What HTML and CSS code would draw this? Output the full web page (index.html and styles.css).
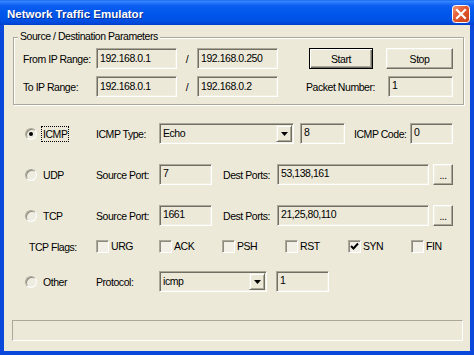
FILE: index.html
```html
<!DOCTYPE html>
<html>
<head>
<meta charset="utf-8">
<link rel="stylesheet" href="styles.css">
</head>
<body>
<div class="window">
  <div class="titlebar">
    <span class="title">Network Traffic Emulator</span>
    <span class="close">
      <svg width="18" height="18" viewBox="0 0 18 18">
        <defs>
          <linearGradient id="cg" x1="0" y1="0" x2="1" y2="1">
            <stop offset="0" stop-color="#F29A78"/>
            <stop offset="0.45" stop-color="#E2582E"/>
            <stop offset="1" stop-color="#C8401A"/>
          </linearGradient>
        </defs>
        <rect x="0.5" y="0.5" width="17" height="17" rx="3" fill="url(#cg)" stroke="#fff"/>
        <path d="M5 5 L13 13 M13 5 L5 13" stroke="#fff" stroke-width="2.2" stroke-linecap="square"/>
      </svg>
    </span>
  </div>
  <div class="client">
    <div class="group">
      <span class="legend">Source / Destination Parameters</span>
      <div class="row">
        <span class="lbl-ip">From IP Range:</span>
        <span class="edit ip">192.168.0.1</span>
        <span class="slash">/</span>
        <span class="edit ip">192.168.0.250</span>
        <span class="btn default start">Start</span>
        <span class="btn stop">Stop</span>
      </div>
      <div class="row">
        <span class="lbl-ip">To IP Range:</span>
        <span class="edit ip">192.168.0.1</span>
        <span class="slash">/</span>
        <span class="edit ip">192.168.0.2</span>
        <span class="pkt-lbl">Packet Number:</span>
        <span class="edit top pkt">1</span>
      </div>
    </div>

    <div class="opt icmp">
      <span class="rcell"><span class="radio checked"></span><span class="ltxt focus">ICMP</span></span>
      <span class="l2">ICMP Type:</span>
      <span class="combo icmp-combo"><span class="ctext">Echo</span><span class="drop"><svg width="7" height="4" viewBox="0 0 7 4"><path d="M0 0H7L3.5 4Z" fill="#000"/></svg></span></span>
      <span class="edit top type-num">8</span>
      <span class="code-lbl">ICMP Code:</span>
      <span class="edit top code">0</span>
    </div>

    <div class="opt udp">
      <span class="rcell"><span class="radio"></span><span class="ltxt">UDP</span></span>
      <span class="l2">Source Port:</span>
      <span class="edit top sport">7</span>
      <span class="dest-lbl">Dest Ports:</span>
      <span class="edit top dport">53,138,161</span>
      <span class="btn dots">...</span>
    </div>

    <div class="opt tcp">
      <span class="rcell"><span class="radio"></span><span class="ltxt">TCP</span></span>
      <span class="l2">Source Port:</span>
      <span class="edit top sport">1661</span>
      <span class="dest-lbl">Dest Ports:</span>
      <span class="edit top dport">21,25,80,110</span>
      <span class="btn dots">...</span>
    </div>

    <div class="opt flags">
      <span class="flags-lbl">TCP Flags:</span>
      <span class="flag"><span class="cb"></span><span class="ftxt">URG</span></span>
      <span class="flag"><span class="cb"></span><span class="ftxt">ACK</span></span>
      <span class="flag"><span class="cb"></span><span class="ftxt">PSH</span></span>
      <span class="flag"><span class="cb"></span><span class="ftxt">RST</span></span>
      <span class="flag"><span class="cb"><svg width="9" height="9" viewBox="0 0 9 9"><path d="M1 4 L3.5 6.5 L8 1.5" stroke="#000" stroke-width="2" fill="none"/></svg></span><span class="ftxt">SYN</span></span>
      <span class="flag"><span class="cb"></span><span class="ftxt">FIN</span></span>
    </div>

    <div class="opt other">
      <span class="rcell"><span class="radio"></span><span class="ltxt">Other</span></span>
      <span class="l2">Protocol:</span>
      <span class="combo proto-combo"><span class="ctext">icmp</span><span class="drop"><svg width="7" height="4" viewBox="0 0 7 4"><path d="M0 0H7L3.5 4Z" fill="#000"/></svg></span></span>
      <span class="edit top proto-num">1</span>
    </div>

    <div class="status"></div>
  </div>
</div>
</body>
</html>
```
FILE: styles.css
```css
* { box-sizing: border-box; }
html, body { margin: 0; padding: 0; }
body {
  width: 474px;
  height: 355px;
  overflow: hidden;
  font-family: "Liberation Sans", Arial, sans-serif;
  font-size: 10.5px;
  letter-spacing: -0.45px;
  white-space: nowrap;
  color: #000;
  background: #0A47DB;
}
.window {
  width: 474px;
  height: 355px;
  display: flex;
  flex-direction: column;
  background: #0A48DC;
}
.titlebar {
  height: 25px;
  flex: none;
  display: flex;
  align-items: flex-start;
  justify-content: space-between;
  padding: 0 4px 0 7px;
  background: linear-gradient(to bottom, #0A5AEE 0px, #3B8CFF 1px, #2474FA 3px, #0A5DF0 6px, #0056EB 14px, #0052E6 20px, #0045D5 24px, #003CC8 25px);
}
.title {
  margin-top: 7px;
  line-height: 14px;
  color: #fff;
  font-weight: bold;
  font-size: 11.5px;
  letter-spacing: 0;
  text-shadow: 1px 1px 0 #0A2C8C;
}
.close { display: block; width: 18px; height: 18px; margin-top: 5px; }
.close svg { display: block; }

.client {
  flex: 1;
  margin: 0 4px 4px;
  background: #ECE9D8;
  padding-top: 12px;
}

.group {
  position: relative;
  margin-left: 9px;
  width: 451px;
  border: 1px solid #ACA899;
  box-shadow: inset 1px 1px 0 #fff, 1px 1px 0 #fff;
  padding: 10px 0 7px 9px;
}
.legend {
  position: absolute;
  top: -8px;
  left: 4px;
  padding: 0 2px;
  line-height: 13px;
  background: #ECE9D8;
}
.row {
  display: flex;
  align-items: center;
  height: 21px;
}
.row + .row { margin-top: 7px; }
.lbl-ip { width: 73px; flex: none; }
.slash { width: 20px; flex: none; text-align: center; }

.edit {
  flex: none;
  height: 21px;
  border: 1px solid;
  border-color: #ACA899 #fff #fff #ACA899;
  box-shadow: inset 1px 1px 0 #716F64, inset -1px -1px 0 #F1EFE2;
  background: #ECE9D8;
  padding: 0 0 0 3px;
  line-height: 19px;
}
.edit.top { line-height: 13px; padding-top: 2px; }
.ip { width: 81px; }

.btn {
  flex: none;
  height: 21px;
  display: flex;
  align-items: center;
  justify-content: center;
  background: #ECE9D8;
  border: 1px solid;
  border-color: #fff #716F64 #716F64 #fff;
  box-shadow: inset -1px -1px 0 #ACA899, inset 1px 1px 0 #F1EFE2;
}
.btn.default {
  border-color: #000;
  box-shadow: inset 1px 1px 0 #fff, inset -1px -1px 0 #716F64, inset -2px -2px 0 #ACA899;
}
.start { margin-left: 31px; width: 64px; }
.stop { margin-left: 13px; width: 67px; }
.pkt-lbl { margin-left: 28px; width: 82px; flex: none; }
.pkt { width: 65px; }

.opt {
  display: flex;
  align-items: center;
  height: 21px;
  margin-left: 21px;
}
.opt.icmp { margin-top: 18px; }
.opt.udp { margin-top: 20px; }
.opt.tcp { margin-top: 20px; }
.opt.flags { margin-top: 10px; }
.opt.other { margin-top: 14px; }

.rcell { width: 71px; flex: none; display: flex; align-items: center; }
.radio {
  position: relative;
  width: 12px;
  height: 12px;
  border-radius: 50%;
  border: 1px solid;
  border-color: #ACA899 #fff #fff #ACA899;
  box-shadow: inset 1px 1px 0 #8E8B7E;
  background: #EFEDE2;
  flex: none;
}
.radio.checked::after {
  content: "";
  position: absolute;
  left: 3px;
  top: 3px;
  width: 4px;
  height: 4px;
  border-radius: 50%;
  background: #000;
}
.ltxt {
  margin-left: 4px;
  padding: 1px 1px 0;
  border: 1px dotted transparent;
  line-height: 13px;
}
.ltxt.focus { border-color: #000; }
.l2 { width: 63px; flex: none; }

.combo {
  flex: none;
  height: 21px;
  display: flex;
  align-items: center;
  justify-content: space-between;
  border: 1px solid;
  border-color: #ACA899 #fff #fff #ACA899;
  box-shadow: inset 1px 1px 0 #716F64, inset -1px -1px 0 #F1EFE2;
  background: #ECE9D8;
  padding: 1px;
}
.ctext { padding-left: 2px; line-height: 13px; }
.drop {
  width: 16px;
  height: 17px;
  display: flex;
  align-items: center;
  justify-content: center;
  border: 1px solid;
  border-color: #F1EFE2 #716F64 #716F64 #F1EFE2;
  box-shadow: inset 1px 1px 0 #fff, inset -1px -1px 0 #ACA899;
  background: #ECE9D8;
}
.drop svg { display: block; }
.icmp-combo { width: 135px; }
.type-num { margin-left: 6px; width: 45px; }
.code-lbl { margin-left: 9px; width: 56px; flex: none; }
.code { width: 43px; }

.sport { width: 53px; }
.dest-lbl { margin-left: 11px; width: 54px; flex: none; }
.dport { width: 152px; }
.dots { margin-left: 4px; width: 20px; height: 21px; font-size: 10px; padding-top: 2px; }

.flags-lbl { width: 71px; flex: none; padding-left: 4px; }
.flag { width: 63px; flex: none; display: flex; align-items: center; }
.cb {
  width: 13px;
  height: 13px;
  flex: none;
  display: flex;
  align-items: center;
  justify-content: center;
  border: 1px solid;
  border-color: #ACA899 #fff #fff #ACA899;
  box-shadow: inset 1px 1px 0 #8E8B7E;
  background: #F2F0E6;
}
.cb svg { display: block; }
.ftxt { margin-left: 2px; line-height: 13px; }

.proto-combo { width: 108px; }
.proto-num { margin-left: 9px; width: 53px; }

.status {
  margin: 28px 0 0 8px;
  width: 451px;
  height: 21px;
  border: 1px solid;
  border-color: #ACA899 #fff #fff #ACA899;
}
```
